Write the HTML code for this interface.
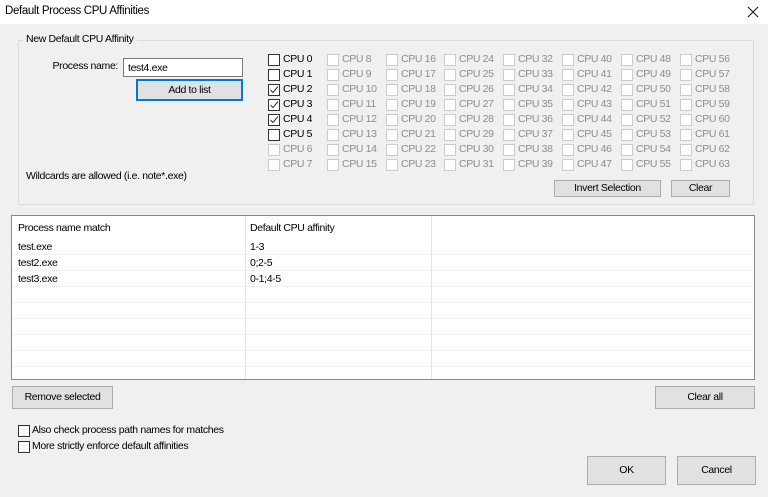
<!DOCTYPE html>
<html><head><style>
*{box-sizing:border-box;margin:0;padding:0}
body{width:768px;height:497px;background:#f0f0f0;font-family:"Liberation Sans",sans-serif;font-size:10.5px;letter-spacing:-0.35px;color:#000;position:relative;overflow:hidden}
.a{position:absolute;white-space:nowrap}
.btn{position:absolute;background:#e1e1e1;border:1px solid #adadad;text-align:center}
.cb{position:absolute;width:12px;height:12px;border:1px solid #333;background:#fff}
.cb.d{border-color:#ccc}
.l{position:absolute;white-space:nowrap}
.g{color:#8d8d8d}
.hl{position:absolute;left:12px;width:742px;height:1px;background:#f0f0f0}
</style></head><body>
<div class="a" style="left:0;top:0;width:768px;height:24px;background:#fff"></div>
<div class="a" style="left:5px;top:5px;font-size:11.5px">Default Process CPU Affinities</div>
<svg class="a" style="left:747px;top:6px" width="12" height="12"><path d="M1 1L11 11M11 1L1 11" stroke="#222" stroke-width="1.2"/></svg>

<div class="a" style="left:18px;top:40px;width:736px;height:165px;border:1px solid #dcdcdc"></div>
<div class="a" style="left:23px;top:33px;background:#f0f0f0;padding:0 3px">New Default CPU Affinity</div>
<div class="a" style="left:30px;top:60px;width:88px;text-align:right">Process name:</div>
<div class="a" style="left:123px;top:58px;width:120px;height:19px;background:#fff;border:1px solid #7a7a7a;padding:3px 0 0 4px">test4.exe</div>
<div class="btn" style="left:136px;top:79px;width:107px;height:22px;border:2px solid #0078d7;line-height:18px">Add to list</div>
<div class="a" style="left:26px;top:170px">Wildcards are allowed (i.e. note*.exe)</div>

<div class="cb" style="left:268px;top:54px"></div><div class="l" style="left:283px;top:53px">CPU 0</div>
<div class="cb" style="left:268px;top:69px"></div><div class="l" style="left:283px;top:68px">CPU 1</div>
<div class="cb" style="left:268px;top:84px"><svg width="10" height="10" style="position:absolute;left:0;top:0"><path d="M1.5 5L4 7.5L9 1.5" stroke="#333" fill="none"/></svg></div><div class="l" style="left:283px;top:83px">CPU 2</div>
<div class="cb" style="left:268px;top:99px"><svg width="10" height="10" style="position:absolute;left:0;top:0"><path d="M1.5 5L4 7.5L9 1.5" stroke="#333" fill="none"/></svg></div><div class="l" style="left:283px;top:98px">CPU 3</div>
<div class="cb" style="left:268px;top:114px"><svg width="10" height="10" style="position:absolute;left:0;top:0"><path d="M1.5 5L4 7.5L9 1.5" stroke="#333" fill="none"/></svg></div><div class="l" style="left:283px;top:113px">CPU 4</div>
<div class="cb" style="left:268px;top:129px"></div><div class="l" style="left:283px;top:128px">CPU 5</div>
<div class="cb d" style="left:268px;top:144px"></div><div class="l g" style="left:283px;top:143px">CPU 6</div>
<div class="cb d" style="left:268px;top:159px"></div><div class="l g" style="left:283px;top:158px">CPU 7</div>
<div class="cb d" style="left:327px;top:54px"></div><div class="l g" style="left:342px;top:53px">CPU 8</div>
<div class="cb d" style="left:327px;top:69px"></div><div class="l g" style="left:342px;top:68px">CPU 9</div>
<div class="cb d" style="left:327px;top:84px"></div><div class="l g" style="left:342px;top:83px">CPU 10</div>
<div class="cb d" style="left:327px;top:99px"></div><div class="l g" style="left:342px;top:98px">CPU 11</div>
<div class="cb d" style="left:327px;top:114px"></div><div class="l g" style="left:342px;top:113px">CPU 12</div>
<div class="cb d" style="left:327px;top:129px"></div><div class="l g" style="left:342px;top:128px">CPU 13</div>
<div class="cb d" style="left:327px;top:144px"></div><div class="l g" style="left:342px;top:143px">CPU 14</div>
<div class="cb d" style="left:327px;top:159px"></div><div class="l g" style="left:342px;top:158px">CPU 15</div>
<div class="cb d" style="left:386px;top:54px"></div><div class="l g" style="left:401px;top:53px">CPU 16</div>
<div class="cb d" style="left:386px;top:69px"></div><div class="l g" style="left:401px;top:68px">CPU 17</div>
<div class="cb d" style="left:386px;top:84px"></div><div class="l g" style="left:401px;top:83px">CPU 18</div>
<div class="cb d" style="left:386px;top:99px"></div><div class="l g" style="left:401px;top:98px">CPU 19</div>
<div class="cb d" style="left:386px;top:114px"></div><div class="l g" style="left:401px;top:113px">CPU 20</div>
<div class="cb d" style="left:386px;top:129px"></div><div class="l g" style="left:401px;top:128px">CPU 21</div>
<div class="cb d" style="left:386px;top:144px"></div><div class="l g" style="left:401px;top:143px">CPU 22</div>
<div class="cb d" style="left:386px;top:159px"></div><div class="l g" style="left:401px;top:158px">CPU 23</div>
<div class="cb d" style="left:444px;top:54px"></div><div class="l g" style="left:459px;top:53px">CPU 24</div>
<div class="cb d" style="left:444px;top:69px"></div><div class="l g" style="left:459px;top:68px">CPU 25</div>
<div class="cb d" style="left:444px;top:84px"></div><div class="l g" style="left:459px;top:83px">CPU 26</div>
<div class="cb d" style="left:444px;top:99px"></div><div class="l g" style="left:459px;top:98px">CPU 27</div>
<div class="cb d" style="left:444px;top:114px"></div><div class="l g" style="left:459px;top:113px">CPU 28</div>
<div class="cb d" style="left:444px;top:129px"></div><div class="l g" style="left:459px;top:128px">CPU 29</div>
<div class="cb d" style="left:444px;top:144px"></div><div class="l g" style="left:459px;top:143px">CPU 30</div>
<div class="cb d" style="left:444px;top:159px"></div><div class="l g" style="left:459px;top:158px">CPU 31</div>
<div class="cb d" style="left:503px;top:54px"></div><div class="l g" style="left:518px;top:53px">CPU 32</div>
<div class="cb d" style="left:503px;top:69px"></div><div class="l g" style="left:518px;top:68px">CPU 33</div>
<div class="cb d" style="left:503px;top:84px"></div><div class="l g" style="left:518px;top:83px">CPU 34</div>
<div class="cb d" style="left:503px;top:99px"></div><div class="l g" style="left:518px;top:98px">CPU 35</div>
<div class="cb d" style="left:503px;top:114px"></div><div class="l g" style="left:518px;top:113px">CPU 36</div>
<div class="cb d" style="left:503px;top:129px"></div><div class="l g" style="left:518px;top:128px">CPU 37</div>
<div class="cb d" style="left:503px;top:144px"></div><div class="l g" style="left:518px;top:143px">CPU 38</div>
<div class="cb d" style="left:503px;top:159px"></div><div class="l g" style="left:518px;top:158px">CPU 39</div>
<div class="cb d" style="left:562px;top:54px"></div><div class="l g" style="left:577px;top:53px">CPU 40</div>
<div class="cb d" style="left:562px;top:69px"></div><div class="l g" style="left:577px;top:68px">CPU 41</div>
<div class="cb d" style="left:562px;top:84px"></div><div class="l g" style="left:577px;top:83px">CPU 42</div>
<div class="cb d" style="left:562px;top:99px"></div><div class="l g" style="left:577px;top:98px">CPU 43</div>
<div class="cb d" style="left:562px;top:114px"></div><div class="l g" style="left:577px;top:113px">CPU 44</div>
<div class="cb d" style="left:562px;top:129px"></div><div class="l g" style="left:577px;top:128px">CPU 45</div>
<div class="cb d" style="left:562px;top:144px"></div><div class="l g" style="left:577px;top:143px">CPU 46</div>
<div class="cb d" style="left:562px;top:159px"></div><div class="l g" style="left:577px;top:158px">CPU 47</div>
<div class="cb d" style="left:621px;top:54px"></div><div class="l g" style="left:636px;top:53px">CPU 48</div>
<div class="cb d" style="left:621px;top:69px"></div><div class="l g" style="left:636px;top:68px">CPU 49</div>
<div class="cb d" style="left:621px;top:84px"></div><div class="l g" style="left:636px;top:83px">CPU 50</div>
<div class="cb d" style="left:621px;top:99px"></div><div class="l g" style="left:636px;top:98px">CPU 51</div>
<div class="cb d" style="left:621px;top:114px"></div><div class="l g" style="left:636px;top:113px">CPU 52</div>
<div class="cb d" style="left:621px;top:129px"></div><div class="l g" style="left:636px;top:128px">CPU 53</div>
<div class="cb d" style="left:621px;top:144px"></div><div class="l g" style="left:636px;top:143px">CPU 54</div>
<div class="cb d" style="left:621px;top:159px"></div><div class="l g" style="left:636px;top:158px">CPU 55</div>
<div class="cb d" style="left:680px;top:54px"></div><div class="l g" style="left:695px;top:53px">CPU 56</div>
<div class="cb d" style="left:680px;top:69px"></div><div class="l g" style="left:695px;top:68px">CPU 57</div>
<div class="cb d" style="left:680px;top:84px"></div><div class="l g" style="left:695px;top:83px">CPU 58</div>
<div class="cb d" style="left:680px;top:99px"></div><div class="l g" style="left:695px;top:98px">CPU 59</div>
<div class="cb d" style="left:680px;top:114px"></div><div class="l g" style="left:695px;top:113px">CPU 60</div>
<div class="cb d" style="left:680px;top:129px"></div><div class="l g" style="left:695px;top:128px">CPU 61</div>
<div class="cb d" style="left:680px;top:144px"></div><div class="l g" style="left:695px;top:143px">CPU 62</div>
<div class="cb d" style="left:680px;top:159px"></div><div class="l g" style="left:695px;top:158px">CPU 63</div>

<div class="btn" style="left:554px;top:180px;width:107px;height:17px;line-height:15px">Invert Selection</div>
<div class="btn" style="left:671px;top:180px;width:59px;height:17px;line-height:15px">Clear</div>

<div class="a" style="left:11px;top:215px;width:744px;height:165px;background:#fff;border:1px solid #828790"></div>
<div class="hl" style="top:254px"></div><div class="hl" style="top:270px"></div><div class="hl" style="top:286px"></div><div class="hl" style="top:302px"></div><div class="hl" style="top:318px"></div><div class="hl" style="top:334px"></div><div class="hl" style="top:350px"></div><div class="hl" style="top:366px"></div>
<div class="a" style="left:245px;top:216px;width:1px;height:163px;background:#e5e5e5"></div>
<div class="a" style="left:431px;top:216px;width:1px;height:163px;background:#e5e5e5"></div>
<div class="a" style="left:18px;top:222px">Process name match</div>
<div class="a" style="left:250px;top:222px">Default CPU affinity</div>
<div class="a" style="left:18px;top:241px">test.exe</div><div class="a" style="left:250px;top:241px">1-3</div>
<div class="a" style="left:18px;top:257px">test2.exe</div><div class="a" style="left:250px;top:257px">0;2-5</div>
<div class="a" style="left:18px;top:273px">test3.exe</div><div class="a" style="left:250px;top:273px">0-1;4-5</div>

<div class="btn" style="left:12px;top:386px;width:101px;height:23px;line-height:21px">Remove selected</div>
<div class="btn" style="left:655px;top:386px;width:100px;height:23px;line-height:21px">Clear all</div>

<div class="cb" style="left:18px;top:425px"></div><div class="l" style="left:32px;top:424px">Also check process path names for matches</div>
<div class="cb" style="left:18px;top:441px"></div><div class="l" style="left:32px;top:440px">More strictly enforce default affinities</div>

<div class="btn" style="left:587px;top:456px;width:79px;height:29px;line-height:27px">OK</div>
<div class="btn" style="left:677px;top:456px;width:79px;height:29px;line-height:27px">Cancel</div>
</body></html>
